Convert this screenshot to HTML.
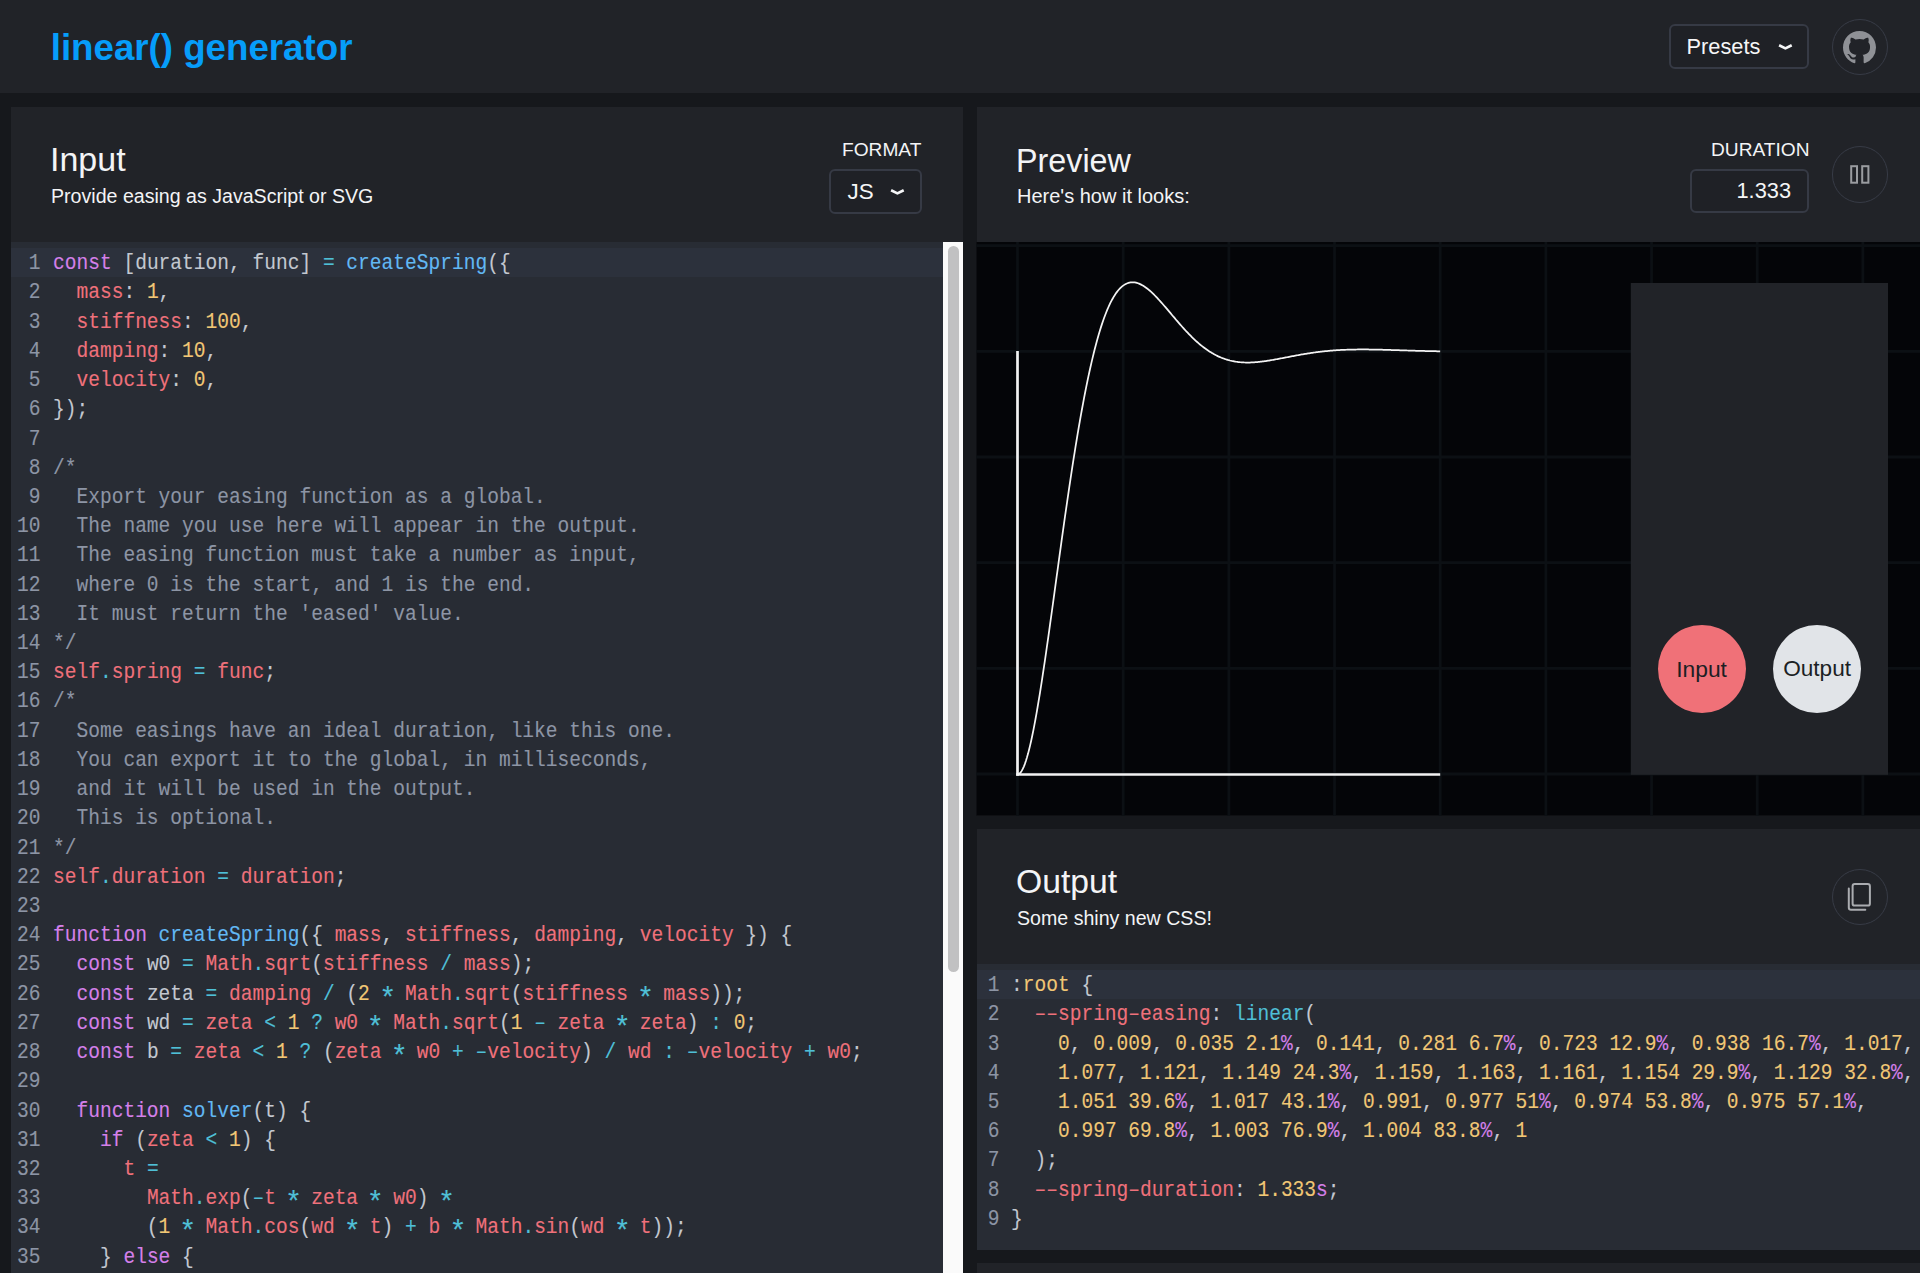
<!DOCTYPE html>
<html><head><meta charset="utf-8">
<style>
html,body{margin:0;padding:0;}
body{width:1920px;height:1273px;overflow:hidden;position:relative;background:#16181c;font-family:"Liberation Sans",sans-serif;color:#f3f4f6;}
.abs{position:absolute;}
#hdr{left:0;top:0;width:1920px;height:93.2px;background:#212328;}
#logo{left:50.7px;top:26px;font-weight:bold;font-size:36.7px;line-height:44px;color:#069dfa;white-space:nowrap;}
.btn{position:absolute;box-sizing:border-box;border:2px solid #363a45;border-radius:6px;background:#1f2126;}
.circ{position:absolute;box-sizing:border-box;border:1.7px solid #373b46;border-radius:50%;}
.lbl{position:absolute;font-size:22px;line-height:26px;white-space:nowrap;color:#f5f6f7;}
.chev{position:absolute;}
.panel{position:absolute;background:#212328;}
.title{position:absolute;font-size:33.5px;line-height:40px;white-space:nowrap;color:#f3f4f6;}
.sub{position:absolute;font-size:19.6px;line-height:24px;white-space:nowrap;color:#f3f4f6;}
.cap{position:absolute;font-size:19.15px;line-height:24px;white-space:nowrap;color:#f3f4f6;text-align:right;}
.code{position:absolute;background:#282c34;font-family:"Liberation Mono",monospace;font-size:22px;color:#c3c8d0;overflow:hidden;-webkit-text-stroke:0.12px;}
.ln{position:relative;height:29.22px;line-height:29.22px;white-space:pre;}
.ln.act{background:#2c313c;}
.g{position:absolute;left:0;top:1.2px;text-align:right;color:#8d95a5;transform:scaleX(0.8888);transform-origin:100% 0;}
.tx{position:absolute;top:1.2px;transform:scaleX(0.8888);transform-origin:0 0;}
.k{color:#d580ea}.f{color:#62b8f4}.p{color:#ef717b}.n{color:#f1c775}.o{color:#4fbfd6}.m{color:#8d95a5}.ast{display:inline-block;transform:translateY(6px) scale(1.45,1.3)}
#lcode .g{width:29.5px;}
#lcode .tx{left:42.4px;}
#rcode .g{width:22.5px;}
#rcode .tx{left:34.5px;}
</style></head><body>
<div id="hdr" class="abs">
  <div id="logo" class="abs">linear() generator</div>
  <div class="btn" style="left:1668.75px;top:24px;width:140.7px;height:44.5px;"></div>
  <div class="lbl" style="left:1686.5px;top:33.75px;font-size:21.8px;">Presets</div>
  <svg class="chev" style="left:1776px;top:41px;" width="19" height="10" viewBox="0 0 19 10"><path d="M3.1 4.3 L9.4 7.4 L15.7 4.3" fill="none" stroke="#f5f6f7" stroke-width="2.7" stroke-linejoin="round"/></svg>
  <div class="circ" style="left:1831.5px;top:18.5px;width:56.3px;height:56.3px;"></div>
  <svg class="abs" style="left:1843px;top:30.5px;" width="33" height="33" viewBox="0 0 16 16"><path fill="#8f9196" d="M8 0C3.58 0 0 3.58 0 8c0 3.54 2.29 6.53 5.47 7.59.4.07.55-.17.55-.38 0-.19-.01-.82-.01-1.49-2.01.37-2.53-.49-2.69-.94-.09-.23-.48-.94-.82-1.13-.28-.15-.68-.52-.01-.53.63-.01 1.08.58 1.23.82.72 1.21 1.87.87 2.33.66.07-.52.28-.87.51-1.07-1.78-.2-3.64-.89-3.64-3.95 0-.87.31-1.59.82-2.15-.08-.2-.36-1.02.08-2.12 0 0 .67-.21 2.2.82.64-.18 1.32-.27 2-.27.68 0 1.36.09 2 .27 1.53-1.04 2.2-.82 2.2-.82.44 1.1.16 1.92.08 2.12.51.56.82 1.27.82 2.15 0 3.07-1.87 3.75-3.65 3.95.29.25.54.73.54 1.48 0 1.07-.01 1.93-.01 2.2 0 .21.15.46.55.38A8.013 8.013 0 0016 8c0-4.42-3.58-8-8-8z"/></svg>
</div>

<!-- left panel -->
<div class="panel" style="left:11px;top:107px;width:952px;height:1200px;">
</div>
<div class="title" style="left:50px;top:139.3px;font-size:34px;">Input</div>
<div class="sub" style="left:51px;top:184px;">Provide easing as JavaScript or SVG</div>
<div class="cap" style="left:842px;top:138.45px;">FORMAT</div>
<div class="btn" style="left:828.8px;top:169.2px;width:93.4px;height:44.6px;"></div>
<div class="lbl" style="left:847.5px;top:178.65px;font-size:22.4px;">JS</div>
<svg class="chev" style="left:888.3px;top:185.9px;" width="19" height="10" viewBox="0 0 19 10"><path d="M3.1 4.3 L9.4 7.4 L15.7 4.3" fill="none" stroke="#f5f6f7" stroke-width="2.7" stroke-linejoin="round"/></svg>

<div id="lcode" class="code" style="left:11px;top:242px;width:931.6px;height:1100px;padding-top:6px;box-sizing:border-box;">
<div class="ln act"><span class="g">1</span><span class="tx"><span class="k">const</span> [duration, func] <span class="o">=</span> <span class="f">createSpring</span>({</span></div>
<div class="ln"><span class="g">2</span><span class="tx">  <span class="p">mass</span>: <span class="n">1</span>,</span></div>
<div class="ln"><span class="g">3</span><span class="tx">  <span class="p">stiffness</span>: <span class="n">100</span>,</span></div>
<div class="ln"><span class="g">4</span><span class="tx">  <span class="p">damping</span>: <span class="n">10</span>,</span></div>
<div class="ln"><span class="g">5</span><span class="tx">  <span class="p">velocity</span>: <span class="n">0</span>,</span></div>
<div class="ln"><span class="g">6</span><span class="tx">});</span></div>
<div class="ln"><span class="g">7</span><span class="tx"></span></div>
<div class="ln"><span class="g">8</span><span class="tx"><span class="m">/*</span></span></div>
<div class="ln"><span class="g">9</span><span class="tx"><span class="m">  Export your easing function as a global.</span></span></div>
<div class="ln"><span class="g">10</span><span class="tx"><span class="m">  The name you use here will appear in the output.</span></span></div>
<div class="ln"><span class="g">11</span><span class="tx"><span class="m">  The easing function must take a number as input,</span></span></div>
<div class="ln"><span class="g">12</span><span class="tx"><span class="m">  where 0 is the start, and 1 is the end.</span></span></div>
<div class="ln"><span class="g">13</span><span class="tx"><span class="m">  It must return the &#x27;eased&#x27; value.</span></span></div>
<div class="ln"><span class="g">14</span><span class="tx"><span class="m">*/</span></span></div>
<div class="ln"><span class="g">15</span><span class="tx"><span class="p">self</span><span class="o">.</span><span class="p">spring</span> <span class="o">=</span> <span class="p">func</span>;</span></div>
<div class="ln"><span class="g">16</span><span class="tx"><span class="m">/*</span></span></div>
<div class="ln"><span class="g">17</span><span class="tx"><span class="m">  Some easings have an ideal duration, like this one.</span></span></div>
<div class="ln"><span class="g">18</span><span class="tx"><span class="m">  You can export it to the global, in milliseconds,</span></span></div>
<div class="ln"><span class="g">19</span><span class="tx"><span class="m">  and it will be used in the output.</span></span></div>
<div class="ln"><span class="g">20</span><span class="tx"><span class="m">  This is optional.</span></span></div>
<div class="ln"><span class="g">21</span><span class="tx"><span class="m">*/</span></span></div>
<div class="ln"><span class="g">22</span><span class="tx"><span class="p">self</span><span class="o">.</span><span class="p">duration</span> <span class="o">=</span> <span class="p">duration</span>;</span></div>
<div class="ln"><span class="g">23</span><span class="tx"></span></div>
<div class="ln"><span class="g">24</span><span class="tx"><span class="k">function</span> <span class="f">createSpring</span>({ <span class="p">mass</span>, <span class="p">stiffness</span>, <span class="p">damping</span>, <span class="p">velocity</span> }) {</span></div>
<div class="ln"><span class="g">25</span><span class="tx">  <span class="k">const</span> w0 <span class="o">=</span> <span class="p">Math</span><span class="o">.</span><span class="p">sqrt</span>(<span class="p">stiffness</span> <span class="o">/</span> <span class="p">mass</span>);</span></div>
<div class="ln"><span class="g">26</span><span class="tx">  <span class="k">const</span> zeta <span class="o">=</span> <span class="p">damping</span> <span class="o">/</span> (<span class="n">2</span> <span class="o ast">*</span> <span class="p">Math</span><span class="o">.</span><span class="p">sqrt</span>(<span class="p">stiffness</span> <span class="o ast">*</span> <span class="p">mass</span>));</span></div>
<div class="ln"><span class="g">27</span><span class="tx">  <span class="k">const</span> wd <span class="o">=</span> <span class="p">zeta</span> <span class="o">&lt;</span> <span class="n">1</span> <span class="o">?</span> <span class="p">w0</span> <span class="o ast">*</span> <span class="p">Math</span><span class="o">.</span><span class="p">sqrt</span>(<span class="n">1</span> <span class="o">–</span> <span class="p">zeta</span> <span class="o ast">*</span> <span class="p">zeta</span>) <span class="o">:</span> <span class="n">0</span>;</span></div>
<div class="ln"><span class="g">28</span><span class="tx">  <span class="k">const</span> b <span class="o">=</span> <span class="p">zeta</span> <span class="o">&lt;</span> <span class="n">1</span> <span class="o">?</span> (<span class="p">zeta</span> <span class="o ast">*</span> <span class="p">w0</span> <span class="o">+</span> <span class="o">–</span><span class="p">velocity</span>) <span class="o">/</span> <span class="p">wd</span> <span class="o">:</span> <span class="o">–</span><span class="p">velocity</span> <span class="o">+</span> <span class="p">w0</span>;</span></div>
<div class="ln"><span class="g">29</span><span class="tx"></span></div>
<div class="ln"><span class="g">30</span><span class="tx">  <span class="k">function</span> <span class="f">solver</span>(t) {</span></div>
<div class="ln"><span class="g">31</span><span class="tx">    <span class="k">if</span> (<span class="p">zeta</span> <span class="o">&lt;</span> <span class="n">1</span>) {</span></div>
<div class="ln"><span class="g">32</span><span class="tx">      <span class="p">t</span> <span class="o">=</span></span></div>
<div class="ln"><span class="g">33</span><span class="tx">        <span class="p">Math</span><span class="o">.</span><span class="p">exp</span>(<span class="o">–</span><span class="p">t</span> <span class="o ast">*</span> <span class="p">zeta</span> <span class="o ast">*</span> <span class="p">w0</span>) <span class="o ast">*</span></span></div>
<div class="ln"><span class="g">34</span><span class="tx">        (<span class="n">1</span> <span class="o ast">*</span> <span class="p">Math</span><span class="o">.</span><span class="p">cos</span>(<span class="p">wd</span> <span class="o ast">*</span> <span class="p">t</span>) <span class="o">+</span> <span class="p">b</span> <span class="o ast">*</span> <span class="p">Math</span><span class="o">.</span><span class="p">sin</span>(<span class="p">wd</span> <span class="o ast">*</span> <span class="p">t</span>));</span></div>
<div class="ln"><span class="g">35</span><span class="tx">    } <span class="k">else</span> {</span></div>
<div class="ln"><span class="g">36</span><span class="tx">      <span class="p">t</span> <span class="o">=</span></span></div>
</div>
<div class="abs" style="left:942.6px;top:242px;width:20.6px;height:1100px;background:#fafafa;"></div>
<div class="abs" style="left:948px;top:246px;width:11px;height:726px;background:#c1c1c2;border-radius:6px;"></div>

<!-- preview panel -->
<div class="panel" style="left:976.5px;top:107px;width:960px;height:708.6px;"></div>
<div class="title" style="left:1016px;top:140.8px;font-size:32.3px;">Preview</div>
<div class="sub" style="left:1017px;top:184px;font-size:20px;">Here's how it looks:</div>
<div class="cap" style="left:1711px;top:138.4px;">DURATION</div>
<div class="btn" style="left:1690.2px;top:169.4px;width:119px;height:44.1px;"></div>
<div class="lbl" style="left:1736.5px;top:178.4px;font-size:21.8px;">1.333</div>
<div class="circ" style="left:1831.6px;top:146.3px;width:56.3px;height:56.3px;"></div>
<svg class="abs" style="left:1848px;top:163px;" width="24" height="23" viewBox="0 0 24 23"><rect x="3.2" y="3.2" width="5.8" height="16.5" fill="none" stroke="#9a9ca0" stroke-width="2"/><rect x="14.2" y="3.2" width="6.2" height="16.5" fill="none" stroke="#9a9ca0" stroke-width="2"/></svg>

<svg class="abs" style="left:0;top:0;" width="1920" height="1273" viewBox="0 0 1920 1273">
  <rect x="976.5" y="242" width="944" height="573.6" fill="#040508"/>
  <g stroke="#0c1014" stroke-width="2.8">
<line x1="1017.50" y1="242" x2="1017.50" y2="816" />
<line x1="1123.17" y1="242" x2="1123.17" y2="816" />
<line x1="1228.85" y1="242" x2="1228.85" y2="816" />
<line x1="1334.53" y1="242" x2="1334.53" y2="816" />
<line x1="1440.20" y1="242" x2="1440.20" y2="816" />
<line x1="1545.88" y1="242" x2="1545.88" y2="816" />
<line x1="1651.55" y1="242" x2="1651.55" y2="816" />
<line x1="1757.23" y1="242" x2="1757.23" y2="816" />
<line x1="1862.90" y1="242" x2="1862.90" y2="816" />
<line x1="976" y1="245.62" x2="1920" y2="245.62" />
<line x1="976" y1="351.30" x2="1920" y2="351.30" />
<line x1="976" y1="456.98" x2="1920" y2="456.98" />
<line x1="976" y1="562.65" x2="1920" y2="562.65" />
<line x1="976" y1="668.33" x2="1920" y2="668.33" />
<line x1="976" y1="774.00" x2="1920" y2="774.00" />
  </g>
  <rect x="1630.8" y="283" width="257.2" height="491.8" fill="#212328"/>
  <line x1="1017.5" y1="351" x2="1017.5" y2="775.8" stroke="#f2f2f2" stroke-width="2.7"/>
  <line x1="1016.2" y1="774.5" x2="1440.2" y2="774.5" stroke="#f2f2f2" stroke-width="2.7"/>
  <polyline points="1017.50,774.50 1018.56,774.27 1019.61,773.58 1020.67,772.46 1021.73,770.91 1022.78,768.95 1023.84,766.60 1024.90,763.88 1025.95,760.79 1027.01,757.36 1028.07,753.60 1029.12,749.52 1030.18,745.14 1031.24,740.47 1032.29,735.53 1033.35,730.34 1034.41,724.90 1035.46,719.23 1036.52,713.34 1037.58,707.25 1038.63,700.97 1039.69,694.52 1040.75,687.90 1041.81,681.13 1042.86,674.23 1043.92,667.20 1044.98,660.05 1046.03,652.80 1047.09,645.46 1048.15,638.03 1049.20,630.54 1050.26,622.99 1051.32,615.39 1052.37,607.75 1053.43,600.08 1054.49,592.39 1055.54,584.69 1056.60,576.98 1057.66,569.29 1058.71,561.60 1059.77,553.94 1060.83,546.31 1061.88,538.71 1062.94,531.16 1064.00,523.66 1065.05,516.22 1066.11,508.85 1067.17,501.54 1068.22,494.30 1069.28,487.15 1070.34,480.09 1071.39,473.11 1072.45,466.23 1073.51,459.45 1074.56,452.78 1075.62,446.21 1076.68,439.75 1077.73,433.41 1078.79,427.19 1079.85,421.09 1080.90,415.11 1081.96,409.26 1083.02,403.54 1084.08,397.94 1085.13,392.48 1086.19,387.16 1087.25,381.97 1088.30,376.91 1089.36,372.00 1090.42,367.22 1091.47,362.58 1092.53,358.08 1093.59,353.72 1094.64,349.50 1095.70,345.43 1096.76,341.49 1097.81,337.69 1098.87,334.03 1099.93,330.51 1100.98,327.13 1102.04,323.88 1103.10,320.77 1104.15,317.80 1105.21,314.96 1106.27,312.25 1107.32,309.68 1108.38,307.23 1109.44,304.91 1110.49,302.72 1111.55,300.66 1112.61,298.72 1113.66,296.89 1114.72,295.19 1115.78,293.61 1116.83,292.14 1117.89,290.78 1118.95,289.53 1120.00,288.39 1121.06,287.36 1122.12,286.43 1123.17,285.60 1124.23,284.87 1125.29,284.24 1126.35,283.70 1127.40,283.26 1128.46,282.90 1129.52,282.63 1130.57,282.44 1131.63,282.33 1132.69,282.31 1133.74,282.35 1134.80,282.48 1135.86,282.67 1136.91,282.93 1137.97,283.26 1139.03,283.65 1140.08,284.11 1141.14,284.62 1142.20,285.18 1143.25,285.81 1144.31,286.48 1145.37,287.20 1146.42,287.97 1147.48,288.78 1148.54,289.63 1149.59,290.52 1150.65,291.45 1151.71,292.42 1152.76,293.41 1153.82,294.44 1154.88,295.50 1155.93,296.58 1156.99,297.69 1158.05,298.82 1159.10,299.97 1160.16,301.13 1161.22,302.32 1162.27,303.52 1163.33,304.73 1164.39,305.95 1165.44,307.18 1166.50,308.42 1167.56,309.67 1168.62,310.92 1169.67,312.18 1170.73,313.43 1171.79,314.69 1172.84,315.94 1173.90,317.19 1174.96,318.44 1176.01,319.69 1177.07,320.92 1178.13,322.15 1179.18,323.38 1180.24,324.59 1181.30,325.79 1182.35,326.98 1183.41,328.16 1184.47,329.32 1185.52,330.47 1186.58,331.60 1187.64,332.72 1188.69,333.83 1189.75,334.91 1190.81,335.98 1191.86,337.03 1192.92,338.06 1193.98,339.07 1195.03,340.06 1196.09,341.04 1197.15,341.99 1198.20,342.92 1199.26,343.83 1200.32,344.71 1201.37,345.58 1202.43,346.42 1203.49,347.24 1204.54,348.04 1205.60,348.82 1206.66,349.57 1207.72,350.30 1208.77,351.01 1209.83,351.69 1210.89,352.35 1211.94,352.99 1213.00,353.61 1214.06,354.20 1215.11,354.77 1216.17,355.32 1217.23,355.84 1218.28,356.35 1219.34,356.83 1220.40,357.29 1221.45,357.73 1222.51,358.14 1223.57,358.54 1224.62,358.92 1225.68,359.27 1226.74,359.60 1227.79,359.92 1228.85,360.21 1229.91,360.49 1230.96,360.74 1232.02,360.98 1233.08,361.20 1234.13,361.40 1235.19,361.58 1236.25,361.75 1237.30,361.90 1238.36,362.03 1239.42,362.15 1240.47,362.25 1241.53,362.33 1242.59,362.40 1243.64,362.46 1244.70,362.50 1245.76,362.53 1246.81,362.55 1247.87,362.55 1248.93,362.54 1249.99,362.52 1251.04,362.48 1252.10,362.44 1253.16,362.38 1254.21,362.32 1255.27,362.24 1256.33,362.16 1257.38,362.06 1258.44,361.96 1259.50,361.85 1260.55,361.73 1261.61,361.61 1262.67,361.47 1263.72,361.33 1264.78,361.19 1265.84,361.03 1266.89,360.88 1267.95,360.71 1269.01,360.55 1270.06,360.37 1271.12,360.20 1272.18,360.01 1273.23,359.83 1274.29,359.64 1275.35,359.45 1276.40,359.26 1277.46,359.06 1278.52,358.86 1279.57,358.66 1280.63,358.46 1281.69,358.26 1282.74,358.06 1283.80,357.85 1284.86,357.65 1285.91,357.44 1286.97,357.24 1288.03,357.03 1289.08,356.83 1290.14,356.63 1291.20,356.42 1292.26,356.22 1293.31,356.02 1294.37,355.82 1295.43,355.63 1296.48,355.43 1297.54,355.24 1298.60,355.05 1299.65,354.86 1300.71,354.67 1301.77,354.48 1302.82,354.30 1303.88,354.12 1304.94,353.95 1305.99,353.77 1307.05,353.60 1308.11,353.43 1309.16,353.27 1310.22,353.11 1311.28,352.95 1312.33,352.80 1313.39,352.65 1314.45,352.50 1315.50,352.35 1316.56,352.21 1317.62,352.08 1318.67,351.94 1319.73,351.81 1320.79,351.69 1321.84,351.56 1322.90,351.45 1323.96,351.33 1325.01,351.22 1326.07,351.11 1327.13,351.01 1328.18,350.91 1329.24,350.81 1330.30,350.72 1331.35,350.63 1332.41,350.55 1333.47,350.47 1334.53,350.39 1335.58,350.31 1336.64,350.24 1337.70,350.17 1338.75,350.11 1339.81,350.05 1340.87,349.99 1341.92,349.94 1342.98,349.89 1344.04,349.84 1345.09,349.80 1346.15,349.75 1347.21,349.72 1348.26,349.68 1349.32,349.65 1350.38,349.62 1351.43,349.59 1352.49,349.57 1353.55,349.55 1354.60,349.53 1355.66,349.51 1356.72,349.50 1357.77,349.49 1358.83,349.48 1359.89,349.47 1360.94,349.47 1362.00,349.47 1363.06,349.47 1364.11,349.47 1365.17,349.47 1366.23,349.48 1367.28,349.49 1368.34,349.49 1369.40,349.51 1370.45,349.52 1371.51,349.53 1372.57,349.55 1373.62,349.56 1374.68,349.58 1375.74,349.60 1376.80,349.62 1377.85,349.64 1378.91,349.67 1379.97,349.69 1381.02,349.72 1382.08,349.74 1383.14,349.77 1384.19,349.80 1385.25,349.83 1386.31,349.85 1387.36,349.88 1388.42,349.91 1389.48,349.94 1390.53,349.98 1391.59,350.01 1392.65,350.04 1393.70,350.07 1394.76,350.10 1395.82,350.14 1396.87,350.17 1397.93,350.20 1398.99,350.24 1400.04,350.27 1401.10,350.30 1402.16,350.34 1403.21,350.37 1404.27,350.40 1405.33,350.44 1406.38,350.47 1407.44,350.50 1408.50,350.53 1409.55,350.57 1410.61,350.60 1411.67,350.63 1412.72,350.66 1413.78,350.69 1414.84,350.72 1415.89,350.76 1416.95,350.79 1418.01,350.81 1419.07,350.84 1420.12,350.87 1421.18,350.90 1422.24,350.93 1423.29,350.96 1424.35,350.98 1425.41,351.01 1426.46,351.03 1427.52,351.06 1428.58,351.08 1429.63,351.11 1430.69,351.13 1431.75,351.15 1432.80,351.18 1433.86,351.20 1434.92,351.22 1435.97,351.24 1437.03,351.26 1438.09,351.28 1439.14,351.30 1440.20,351.32" fill="none" stroke="#f4f4f4" stroke-width="1.75"/>
</svg>
<div class="abs" style="left:1658px;top:625px;width:88px;height:88px;border-radius:50%;background:#f07178;"></div>
<div class="abs" style="left:1773.2px;top:625px;width:88px;height:88px;border-radius:50%;background:#e1e4e8;"></div>
<div class="lbl" style="left:1676.2px;top:656.4px;color:#1c1f24;font-size:22.8px;">Input</div>
<div class="lbl" style="left:1783.2px;top:656.4px;color:#1c1f24;font-size:22.6px;">Output</div>

<!-- output panel -->
<div class="panel" style="left:976.5px;top:829px;width:960px;height:421px;"></div>
<div class="title" style="left:1016px;top:861.4px;font-size:33.7px;">Output</div>
<div class="sub" style="left:1017px;top:906px;">Some shiny new CSS!</div>
<div class="circ" style="left:1831.6px;top:868.5px;width:56.3px;height:56.3px;"></div>
<svg class="abs" style="left:1846px;top:881px;" width="28" height="32" viewBox="0 0 28 32"><rect x="6.6" y="3" width="17.3" height="21.6" rx="2.2" fill="none" stroke="#aaacb0" stroke-width="2"/><path d="M2.8 7.5 V26.5 Q2.8 28.7 5 28.7 H19.3" fill="none" stroke="#aaacb0" stroke-width="2" stroke-linecap="round"/></svg>

<div id="rcode" class="code" style="left:976.5px;top:964.2px;width:960px;height:285.6px;padding-top:5.7px;box-sizing:border-box;">
<div class="ln act"><span class="g">1</span><span class="tx">:<span class="n">root</span> {</span></div>
<div class="ln"><span class="g">2</span><span class="tx">  <span class="p">––spring–easing</span>: <span class="o">linear</span>(</span></div>
<div class="ln"><span class="g">3</span><span class="tx">    <span class="n">0</span>, <span class="n">0.009</span>, <span class="n">0.035</span> <span class="n">2.1</span><span class="k">%</span>, <span class="n">0.141</span>, <span class="n">0.281</span> <span class="n">6.7</span><span class="k">%</span>, <span class="n">0.723</span> <span class="n">12.9</span><span class="k">%</span>, <span class="n">0.938</span> <span class="n">16.7</span><span class="k">%</span>, <span class="n">1.017</span>,</span></div>
<div class="ln"><span class="g">4</span><span class="tx">    <span class="n">1.077</span>, <span class="n">1.121</span>, <span class="n">1.149</span> <span class="n">24.3</span><span class="k">%</span>, <span class="n">1.159</span>, <span class="n">1.163</span>, <span class="n">1.161</span>, <span class="n">1.154</span> <span class="n">29.9</span><span class="k">%</span>, <span class="n">1.129</span> <span class="n">32.8</span><span class="k">%</span>,</span></div>
<div class="ln"><span class="g">5</span><span class="tx">    <span class="n">1.051</span> <span class="n">39.6</span><span class="k">%</span>, <span class="n">1.017</span> <span class="n">43.1</span><span class="k">%</span>, <span class="n">0.991</span>, <span class="n">0.977</span> <span class="n">51</span><span class="k">%</span>, <span class="n">0.974</span> <span class="n">53.8</span><span class="k">%</span>, <span class="n">0.975</span> <span class="n">57.1</span><span class="k">%</span>,</span></div>
<div class="ln"><span class="g">6</span><span class="tx">    <span class="n">0.997</span> <span class="n">69.8</span><span class="k">%</span>, <span class="n">1.003</span> <span class="n">76.9</span><span class="k">%</span>, <span class="n">1.004</span> <span class="n">83.8</span><span class="k">%</span>, <span class="n">1</span></span></div>
<div class="ln"><span class="g">7</span><span class="tx">  );</span></div>
<div class="ln"><span class="g">8</span><span class="tx">  <span class="p">––spring–duration</span>: <span class="n">1.333</span><span class="k">s</span>;</span></div>
<div class="ln"><span class="g">9</span><span class="tx">}</span></div>
</div>

<div class="panel" style="left:976.5px;top:1263px;width:960px;height:100px;"></div>
</body></html>
